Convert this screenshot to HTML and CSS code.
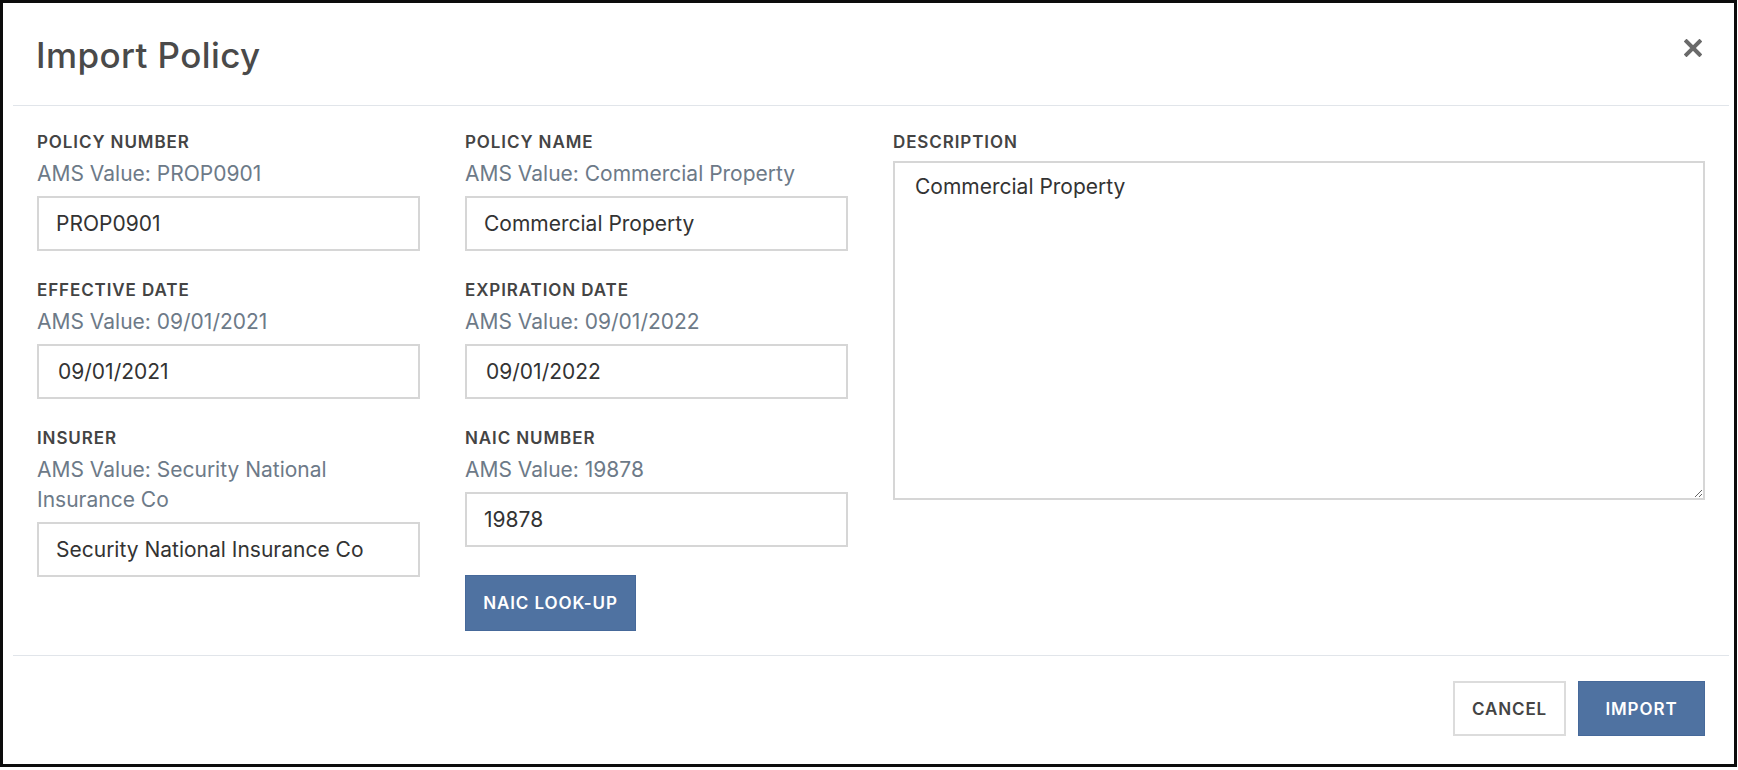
FILE: index.html
```html
<!DOCTYPE html>
<html lang="en">
<head>
<meta charset="UTF-8" />
<title>Import Policy</title>
<meta name="viewport" content="width=device-width, initial-scale=1" />
<link rel="stylesheet" href="styles.css">
</head>
<body>
  <div class="modal">
    <!-- HEADER -->
    <header class="modal-head">
      <h1 class="modal-title">Import Policy</h1>
      <button class="close" aria-label="Close">
        <svg width="18" height="18" viewBox="0 0 18 18">
          <path d="M2.5 2.5 L15.5 15.5 M15.5 2.5 L2.5 15.5" stroke="#6a6a6a" stroke-width="4" stroke-linecap="square" fill="none"/>
        </svg>
      </button>
    </header>
    <hr class="rule" />

    <!-- FORM -->
    <section class="modal-body">
      <div class="col">
        <div class="field">
          <label class="label">POLICY NUMBER</label>
          <div class="ams">AMS Value: PROP0901</div>
          <input class="input" type="text" value="PROP0901" />
        </div>
        <div class="field">
          <label class="label">EFFECTIVE DATE</label>
          <div class="ams">AMS Value: 09/01/2021</div>
          <input class="input date" type="text" value="09/01/2021" />
        </div>
        <div class="field">
          <label class="label">INSURER</label>
          <div class="ams">AMS Value: Security National Insurance Co</div>
          <input class="input" type="text" value="Security National Insurance Co" />
        </div>
      </div>

      <div class="col">
        <div class="field">
          <label class="label">POLICY NAME</label>
          <div class="ams">AMS Value: Commercial Property</div>
          <input class="input" type="text" value="Commercial Property" />
        </div>
        <div class="field">
          <label class="label">EXPIRATION DATE</label>
          <div class="ams">AMS Value: 09/01/2022</div>
          <input class="input date" type="text" value="09/01/2022" />
        </div>
        <div class="field">
          <label class="label">NAIC NUMBER</label>
          <div class="ams">AMS Value: 19878</div>
          <input class="input" type="text" value="19878" />
        </div>
        <div>
          <button class="btn btn-primary lookup">NAIC LOOK-UP</button>
        </div>
      </div>

      <div class="col">
        <div class="field">
          <label class="label desc-label">DESCRIPTION</label>
          <textarea class="textarea">Commercial Property</textarea>
        </div>
      </div>
    </section>
    <hr class="rule" />

    <!-- FOOTER -->
    <footer class="modal-foot">
      <button class="btn btn-default cancel">CANCEL</button>
      <button class="btn btn-primary import">IMPORT</button>
    </footer>
  </div>
</body>
</html>
```

FILE: styles.css
```css
:root {
  --text: #444;
  --muted: #6d7a88;
  --line: #e1e5ea;
  --field: #d6d6d6;
  --primary: #4f72a1;
  --font: 'Inter', 'Liberation Sans', sans-serif;
}

* {
  box-sizing: border-box;
}

html,
body {
  margin: 0;
  padding: 0;
  background: #fff;
  font-family: var(--font);
  color: var(--text);
}

.modal {
  width: 1737px;
  height: 767px;
  border: 3px solid #0c0c0c;
  background: #fff;
}

/* ------------ HEADER ------------- */
.modal-head {
  height: 102px;
  display: flex;
  justify-content: space-between;
  align-items: flex-start;
  padding: 31px 32px 0 33px;
}
.modal-title {
  margin: 0;
  font-size: 35px;
  line-height: 42px;
  font-weight: 500;
  letter-spacing: 0.4px;
  color: #4a4a4a;
}
.close {
  margin-top: 5px;
  padding: 0;
  border: none;
  background: none;
  cursor: pointer;
  line-height: 0;
}

.rule {
  margin: 0 5px 0 10px;
  border: none;
  border-top: 1px solid var(--line);
  height: 0;
}

/* ------------ BODY ------------- */
.modal-body {
  display: grid;
  grid-template-columns: 383px 383px 1fr;
  column-gap: 45px;
  padding: 26px 29px 24px 34px;
}
.col {
  display: flex;
  flex-direction: column;
  gap: 29px;
}
.field {
  display: flex;
  flex-direction: column;
}
.label {
  font-size: 17px;
  line-height: 20px;
  font-weight: 600;
  letter-spacing: 0.9px;
  color: var(--text);
  margin-bottom: 7px;
}
.desc-label { margin-bottom: 9px; }
.ams {
  font-size: 21px;
  line-height: 30px;
  color: var(--muted);
  margin-bottom: 7px;
}
.input {
  height: 55px;
  width: 100%;
  border: 2px solid var(--field);
  padding: 0 17px;
  font-family: var(--font);
  font-size: 21px;
  color: #333;
  outline: none;
}
.input.date { padding-left: 19px; }

.textarea {
  width: 100%;
  height: 339px;
  border: 2px solid var(--field);
  padding: 11px 20px;
  font-family: var(--font);
  font-size: 21px;
  line-height: 26px;
  color: #333;
  outline: none;
}

/* ------------ BUTTONS ------------- */
.btn {
  height: 55px;
  font-family: var(--font);
  font-size: 17px;
  font-weight: 600;
  letter-spacing: 0.9px;
  cursor: pointer;
  padding: 0;
}
.btn-primary {
  background: var(--primary);
  border: 1px solid #46699a;
  color: #fff;
}
.btn-default {
  background: #fff;
  border: 2px solid #dcdcdc;
  color: #444;
}
.lookup {
  width: 171px;
  height: 56px;
  margin-top: -1px;
}

/* ------------ FOOTER ------------- */
.modal-foot {
  display: flex;
  justify-content: flex-end;
  gap: 12px;
  padding: 25px 29px 0 0;
}
.cancel { width: 113px; }
.import { width: 127px; }
```
